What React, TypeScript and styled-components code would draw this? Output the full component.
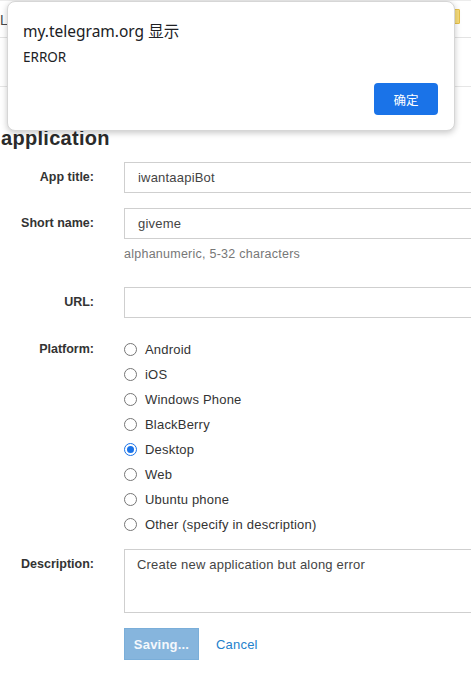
import styled, { createGlobalStyle } from 'styled-components'

const GlobalStyle = createGlobalStyle`
  html, body {
    margin: 0;
    padding: 0;
    background: #fff;
    overflow: hidden;
  }
  body {
    font-family: "Liberation Sans", Arial, sans-serif;
    color: #333;
  }
`

const Page = styled.div`
  position: relative;
  width: 471px;
  height: 687px;
  overflow: hidden;
`

const TopBar = styled.div`
  height: 36px;
  border-top: 1px solid #ececec;
  border-bottom: 1px solid #e3e3e3;
  display: flex;
  align-items: center;
  justify-content: space-between;
`

const TopLink = styled.span`
  font-size: 14px;
  color: #4a4a4a;
  margin-top: 2px;
`

const Badge = styled.span`
  width: 9px;
  height: 13px;
  margin-right: 11px;
  margin-top: -6px;
  background: #f7dc7a;
  border: 1px solid #e6c04a;
  border-radius: 1px;
`

const SubBar = styled.div`
  height: 48px;
  border-bottom: 1px solid #e6e6e6;
`

const Heading = styled.h1`
  margin: 0;
  padding: 39px 0 0 1px;
  font-size: 20px;
  font-weight: 700;
  line-height: 24px;
  color: #2b2b2b;
  letter-spacing: 0.3px;
`

const Form = styled.div`
  display: grid;
  grid-template-columns: 94px 1fr;
  column-gap: 30px;
  margin-top: 12px;
`

const Label = styled.div<{ $top?: number }>`
  text-align: right;
  font-size: 12.5px;
  font-weight: 700;
  color: #333;
  padding-top: ${(p) => p.$top ?? 8}px;
  line-height: 15px;
`

const Field = styled.div<{ $gap?: number }>`
  padding-bottom: ${(p) => p.$gap ?? 15}px;
`

const TextInput = styled.div`
  box-sizing: border-box;
  width: 400px;
  height: 31px;
  border: 1px solid #cfcfcf;
  padding: 0 13px;
  display: flex;
  align-items: center;
  font-size: 13px;
  color: #444;
  letter-spacing: 0.2px;
`

const Hint = styled.div`
  margin-top: 8px;
  font-size: 12.5px;
  color: #777;
  letter-spacing: 0.25px;
  line-height: 15px;
`

const RadioList = styled.div`
  display: flex;
  flex-direction: column;
`

const RadioRow = styled.label`
  display: flex;
  align-items: center;
  height: 25px;
  gap: 8px;
  font-size: 13px;
  color: #333;
  letter-spacing: 0.2px;
`

const Circle = styled.span<{ $checked?: boolean }>`
  box-sizing: border-box;
  width: 13px;
  height: 13px;
  border-radius: 50%;
  border: 1px solid ${(p) => (p.$checked ? '#1a73e8' : '#767676')};
  display: flex;
  align-items: center;
  justify-content: center;
  &::after {
    content: '';
    display: ${(p) => (p.$checked ? 'block' : 'none')};
    width: 7px;
    height: 7px;
    border-radius: 50%;
    background: #1a73e8;
  }
`

const TextArea = styled.div`
  box-sizing: border-box;
  width: 400px;
  height: 64px;
  border: 1px solid #cfcfcf;
  padding: 7px 12px;
  font-size: 13px;
  line-height: 15px;
  color: #444;
  letter-spacing: 0.2px;
`

const Actions = styled.div`
  display: flex;
  align-items: center;
  gap: 17px;
`

const SaveButton = styled.button`
  box-sizing: border-box;
  width: 75px;
  height: 32px;
  background: #86b5dd;
  border: 1px solid #7aaed9;
  color: #f4f8fc;
  font-family: inherit;
  font-size: 13px;
  font-weight: 700;
  letter-spacing: 0.2px;
  padding: 0;
`

const CancelLink = styled.span`
  font-size: 13px;
  color: #2481cc;
  letter-spacing: 0.2px;
`

const Dialog = styled.div`
  position: absolute;
  left: 7px;
  top: 1px;
  width: 448px;
  height: 130px;
  box-sizing: border-box;
  background: #fff;
  border-radius: 8px;
  border: 1px solid #d6d6d6;
  box-shadow: 0 2px 6px rgba(0, 0, 0, 0.22);
  padding: 18px 16px 0 15px;
  font-family: "Noto Sans", "Noto Sans CJK SC", sans-serif;
  display: flex;
  flex-direction: column;
`

const DialogTitle = styled.div`
  font-size: 15.5px;
  line-height: 22px;
  color: #202124;
`

const DialogMessage = styled.div`
  margin-top: 5px;
  font-size: 13.5px;
  line-height: 20px;
  color: #202124;
`

const DialogFooter = styled.div`
  display: flex;
  justify-content: flex-end;
  margin-top: 16px;
`

const OkButton = styled.button`
  width: 64px;
  height: 32px;
  border: none;
  border-radius: 4px;
  background: #1a73e8;
  color: #fff;
  font-family: "Noto Sans CJK SC", sans-serif;
  font-size: 12.5px;
  padding: 0;
`

const platforms = [
  'Android',
  'iOS',
  'Windows Phone',
  'BlackBerry',
  'Desktop',
  'Web',
  'Ubuntu phone',
  'Other (specify in description)',
]

export default function App() {
  return (
    <>
      <GlobalStyle />
      <Page>
        <TopBar>
          <TopLink>Li</TopLink>
          <Badge />
        </TopBar>
        <SubBar />
        <Heading>application</Heading>

        <Form>
          <Label>App title:</Label>
          <Field>
            <TextInput>iwantaapiBot</TextInput>
          </Field>

          <Label>Short name:</Label>
          <Field $gap={25}>
            <TextInput>giveme</TextInput>
            <Hint>alphanumeric, 5-32 characters</Hint>
          </Field>

          <Label>URL:</Label>
          <Field $gap={19}>
            <TextInput />
          </Field>

          <Label $top={5}>Platform:</Label>
          <Field $gap={12}>
            <RadioList>
              {platforms.map((p) => (
                <RadioRow key={p}>
                  <Circle $checked={p === 'Desktop'} />
                  {p}
                </RadioRow>
              ))}
            </RadioList>
          </Field>

          <Label $top={8}>Description:</Label>
          <Field>
            <TextArea>Create new application but along error</TextArea>
          </Field>

          <div />
          <Actions>
            <SaveButton>Saving...</SaveButton>
            <CancelLink>Cancel</CancelLink>
          </Actions>
        </Form>

        <Dialog>
          <DialogTitle>my.telegram.org 显示</DialogTitle>
          <DialogMessage>ERROR</DialogMessage>
          <DialogFooter>
            <OkButton>确定</OkButton>
          </DialogFooter>
        </Dialog>
      </Page>
    </>
  )
}
